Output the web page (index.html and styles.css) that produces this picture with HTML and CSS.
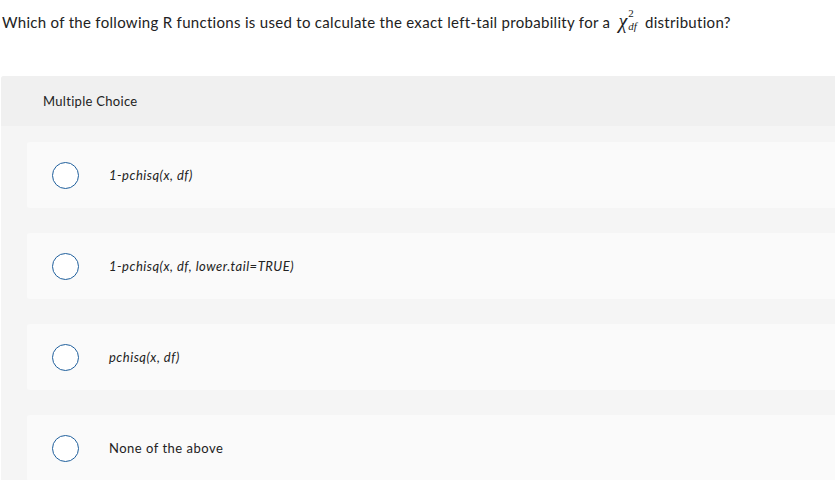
FILE: index.html
```html
<!DOCTYPE html>
<html>
<head>
<meta charset="utf-8">
<link rel="stylesheet" href="styles.css">
</head>
<body>
<div class="question">Which of the following R functions is used to calculate the exact left-tail probability for a <span class="math"><span class="chi">χ</span><span class="scripts"><span class="sup">2</span><span class="sub">df</span></span></span> distribution?</div>
<div class="panel">
  <div class="panel-head">Multiple Choice</div>
  <div class="options">
    <div class="option"><span class="radio"></span><span class="label code">1-pchisq(x, df)</span></div>
    <div class="option"><span class="radio"></span><span class="label code">1-pchisq(x, df, lower.tail=TRUE)</span></div>
    <div class="option"><span class="radio"></span><span class="label code">pchisq(x, df)</span></div>
    <div class="option"><span class="radio"></span><span class="label">None of the above</span></div>
  </div>
</div>
</body>
</html>
```
FILE: styles.css
```css
html, body {
  margin: 0;
  padding: 0;
  background: #ffffff;
  font-family: "Lato", "Liberation Sans", sans-serif;
  color: #222222;
}
.question {
  padding: 7px 0 0 2px;
  font-size: 15px;
  line-height: 20px;
  letter-spacing: 0.3px;
  height: 76px;
  box-sizing: border-box;
}
.math {
  display: inline-block;
  line-height: 20px;
  margin: 0 4px 0 4px;
  font-family: "Liberation Serif", serif;
  font-style: italic;
  letter-spacing: 0;
}
.chi {
  font-size: 20px;
  padding-right: 1px;
}
.scripts {
  display: inline-flex;
  flex-direction: column;
  vertical-align: 11px;
  font-size: 11px;
}
.sup { font-style: normal; line-height: 13px; }
.sub { line-height: 13px; }
.panel {
  margin-left: 1px;
  background: #f5f5f5;
  border-top-left-radius: 3px;
  overflow: hidden;
}
.panel-head {
  height: 50px;
  background: #f0f0f0;
  display: flex;
  align-items: center;
  padding-left: 42px;
  font-size: 13px;
  letter-spacing: 0.3px;
}
.options {
  padding: 16px 0 0 26px;
  display: flex;
  flex-direction: column;
  gap: 25px;
}
.option {
  height: 66px;
  background: #fafafa;
  border-radius: 3px 0 0 3px;
  display: flex;
  align-items: center;
  padding-left: 25px;
}
.radio {
  width: 25px;
  height: 25px;
  border: 1.5px solid #1f5f9c;
  border-radius: 50%;
  background: #ffffff;
  flex: none;
}
.label {
  margin-left: 30px;
  font-size: 13px;
  letter-spacing: 0.5px;
}
.code { font-style: italic; }
```
